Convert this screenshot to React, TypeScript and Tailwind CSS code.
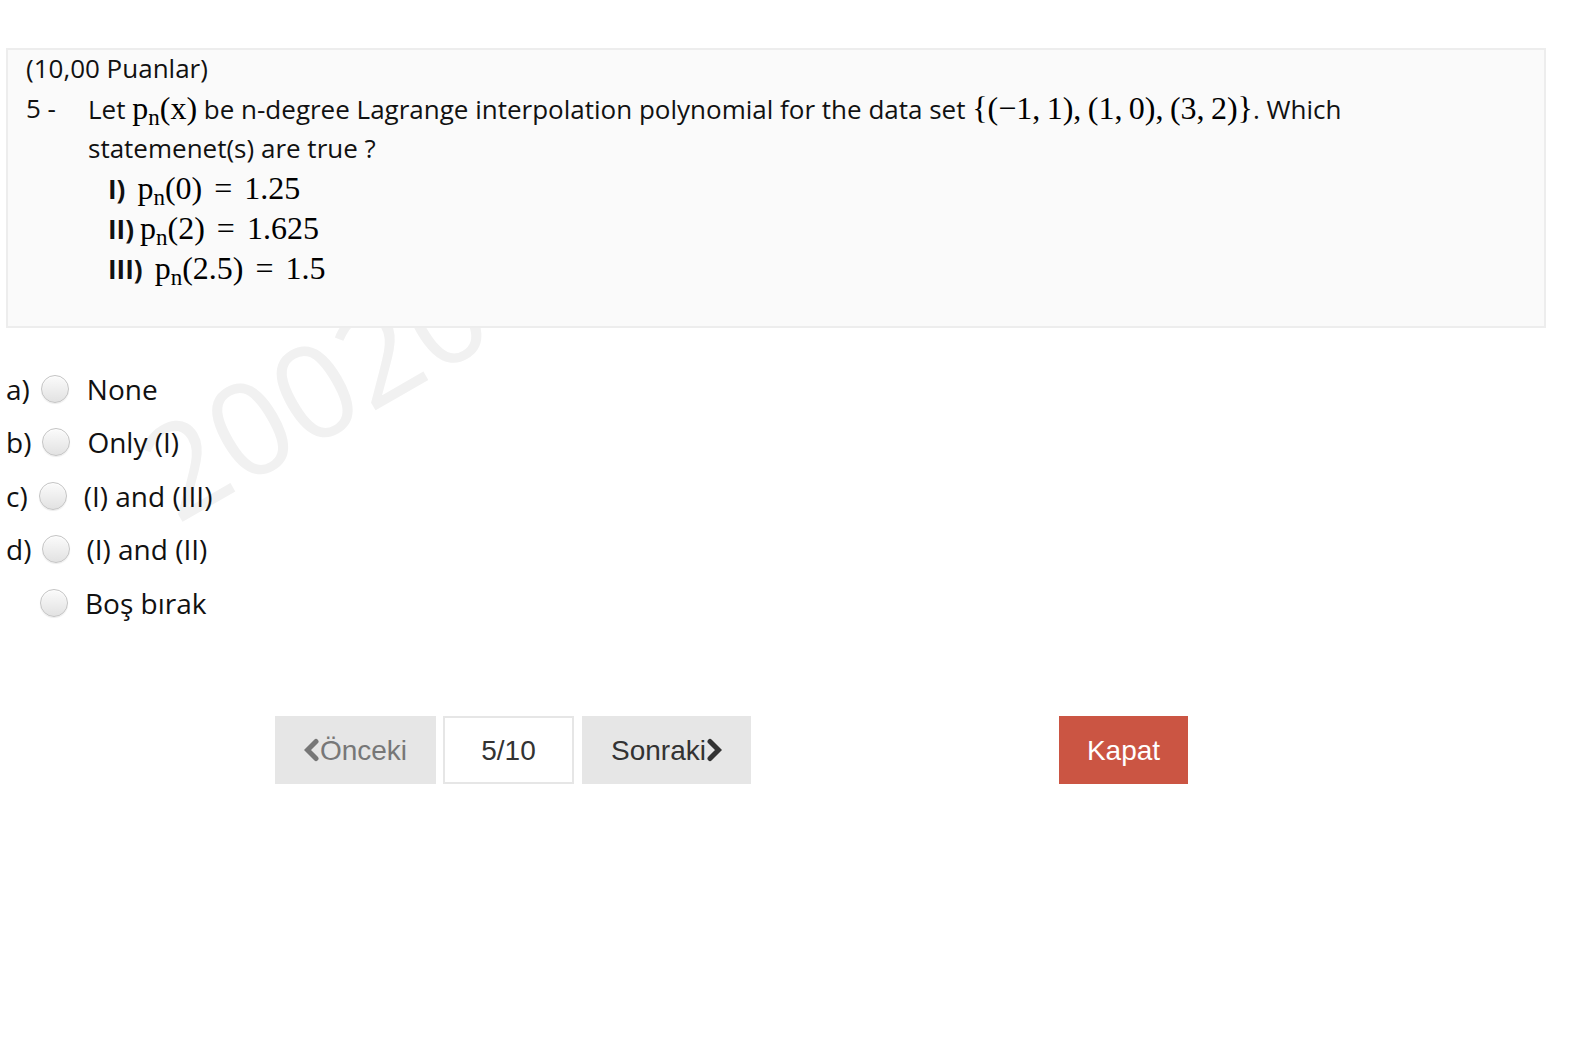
import React from "react";

const serif = { fontFamily: '"Liberation Serif", "Times New Roman", serif' };

function M({ children }: { children: React.ReactNode }) {
  return (
    <span className="text-[32px] text-black" style={serif}>
      {children}
    </span>
  );
}

function Sub({ children }: { children: React.ReactNode }) {
  return <span className="text-[23px] relative top-[6px] leading-none">{children}</span>;
}

function Eq() {
  return <span className="mx-[12px]">=</span>;
}

function Radio({ className = "" }: { className?: string }) {
  return (
    <span
      className={
        "inline-block w-[28px] h-[28px] shrink-0 rounded-full border border-[#c4c4c4] bg-linear-to-b from-[#fbfbfb] to-[#e2e2e2] shadow-[inset_0_1px_1px_rgba(255,255,255,0.9),0_1px_1px_rgba(0,0,0,0.08)] " +
        className
      }
    />
  );
}

function Option({ label, text, radioMl, textMl }: { label: string; text: string; radioMl: string; textMl: string }) {
  return (
    <div className="h-[53.5px] flex items-center">
      {label && <span>{label}</span>}
      <Radio className={radioMl} />
      <span className={textMl}>{text}</span>
    </div>
  );
}

function ChevLeft() {
  return (
    <svg width="15" height="24" viewBox="0 0 15 24" className="mr-[1px] -mt-[2px]">
      <polyline points="12,3.5 3.5,12 12,20.5" fill="none" stroke="currentColor" strokeWidth="5" strokeLinecap="round" strokeLinejoin="miter" />
    </svg>
  );
}

function ChevRight() {
  return (
    <svg width="15" height="24" viewBox="0 0 15 24" className="ml-[1px] -mt-[2px]">
      <polyline points="3,3.5 11.5,12 3,20.5" fill="none" stroke="currentColor" strokeWidth="5" strokeLinecap="round" strokeLinejoin="miter" />
    </svg>
  );
}

export default function App() {
  return (
    <div
      className="relative w-[1576px] h-[1040px] bg-white overflow-hidden text-[#111]"
      style={{ fontFamily: '"Open Sans", "Noto Sans", sans-serif' }}
    >
      {/* watermark */}
      <span className="absolute left-[177px] top-[410px] text-[130px] leading-none text-[#f1f1f1] whitespace-nowrap origin-[0_115px] -rotate-30 select-none">
        200201234
      </span>

      <div className="pt-[48px]">
        <div className="relative z-10 ml-[6px] w-[1540px] h-[280px] border-2 border-[#ededed] bg-[#fafafa] pl-[18px] text-[26px] leading-[40px]">
          <div className="-mt-[2px]">
            <div className="h-[40px]">(10,00 Puanlar)</div>
            <div className="flex">
              <div className="w-[62px] shrink-0 h-[40px]">5 -</div>
              <div>
                <div className="h-[40px] whitespace-nowrap">
                  Let{" "}
                  <M>
                    p<Sub>n</Sub>(x)
                  </M>{" "}
                  be n-degree Lagrange interpolation polynomial for the data set{" "}
                  <M>{"{(\u22121,\u20091),\u2009(1,\u20090),\u2009(3,\u20092)}"}</M>. Which
                </div>
                <div className="h-[40px] whitespace-nowrap">statemenet(s) are true ?</div>
                <div className="h-[40px] whitespace-nowrap pl-[20px]">
                  <span className="font-bold text-[26px]">I)</span>
                  <span className="ml-[12px]">
                    <M>
                      p<Sub>n</Sub>(0)
                      <Eq />
                      1.25
                    </M>
                  </span>
                </div>
                <div className="h-[40px] whitespace-nowrap pl-[20px]">
                  <span className="font-bold text-[26px]">II)</span>
                  <span className="ml-[6px]">
                    <M>
                      p<Sub>n</Sub>(2)
                      <Eq />
                      1.625
                    </M>
                  </span>
                </div>
                <div className="h-[40px] whitespace-nowrap pl-[20px]">
                  <span className="font-bold text-[26px]">III)</span>
                  <span className="ml-[12px]">
                    <M>
                      p<Sub>n</Sub>(2.5)
                      <Eq />
                      1.5
                    </M>
                  </span>
                </div>
              </div>
            </div>
          </div>
        </div>

        <div className="relative z-10 mt-[34px] pl-[6px] text-[28px] leading-none">
          <Option label="a)" text="None" radioMl="ml-[11px]" textMl="ml-[18px]" />
          <Option label="b)" text="Only (I)" radioMl="ml-[11px]" textMl="ml-[17px]" />
          <Option label="c)" text="(I) and (III)" radioMl="ml-[11px]" textMl="ml-[17px]" />
          <Option label="d)" text="(I) and (II)" radioMl="ml-[11px]" textMl="ml-[16px]" />
          <Option label="" text="Boş bırak" radioMl="ml-[34px]" textMl="ml-[17px]" />
        </div>

        <div
          className="mt-[86px] ml-[275px] flex items-stretch h-[68px] text-[28px]"
          style={{ fontFamily: '"Liberation Sans", Arial, sans-serif' }}
        >
          <div className="w-[161px] bg-[#e6e6e6] text-[#777777] flex items-center justify-center pt-[2px]">
            <ChevLeft />
            <span>Önceki</span>
          </div>
          <div className="ml-[7px] w-[131px] bg-white border-2 border-[#e6e6e6] text-[#333333] flex items-center justify-center pt-[2px]">
            5/10
          </div>
          <div className="ml-[8px] w-[169px] bg-[#e6e6e6] text-[#333333] flex items-center justify-center pt-[2px]">
            <span>Sonraki</span>
            <ChevRight />
          </div>
          <div className="ml-[308px] w-[129px] bg-[#cb5543] text-white flex items-center justify-center pt-[2px]">
            Kapat
          </div>
        </div>
      </div>
    </div>
  );
}
